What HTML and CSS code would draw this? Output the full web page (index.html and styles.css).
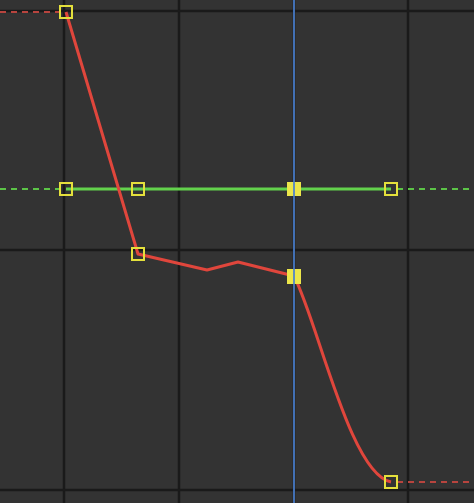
FILE: index.html
```html
<!doctype html>
<html lang="en">
<head>
	<meta charset="UTF-8">
	<title>Graph Editor</title>
	<link rel="stylesheet" href="styles.css">
</head>
<body>
	<div class="graph">
		<svg class="canvas" width="474" height="503" viewBox="0 0 474 503">
			<!-- grid -->
			<g class="grid">
				<line x1="64" y1="0" x2="64" y2="503"/>
				<line x1="179" y1="0" x2="179" y2="503"/>
				<line x1="294" y1="0" x2="294" y2="503"/>
				<line x1="408" y1="0" x2="408" y2="503"/>
				<line x1="0" y1="11" x2="474" y2="11"/>
				<line x1="0" y1="250" x2="474" y2="250"/>
				<line x1="0" y1="490" x2="474" y2="490"/>
			</g>

			<!-- green channel -->
			<line class="green ext" x1="0" y1="189" x2="60" y2="189"/>
			<line class="green ext" x1="397" y1="189" x2="474" y2="189"/>
			<line class="green" x1="66" y1="189" x2="391" y2="189"/>

			<!-- red channel -->
			<line class="red ext" x1="0" y1="12" x2="60" y2="12"/>
			<line class="red ext" x1="397" y1="482" x2="474" y2="482"/>
			<path class="red" d="M66,12 L138,254 L207,270 L238,262 L294,276 C318,322 350,474 391,482"/>

			<!-- keys -->
			<rect class="key" x="60" y="6" width="12" height="12"/>
			<rect class="key" x="60" y="183" width="12" height="12"/>
			<rect class="key" x="132" y="183" width="12" height="12"/>
			<rect class="key" x="385" y="183" width="12" height="12"/>
			<rect class="key" x="132" y="248" width="12" height="12"/>
			<rect class="key" x="385" y="476" width="12" height="12"/>
			<rect class="key sel" x="287" y="182" width="14" height="14"/>
			<rect class="key sel" x="287" y="269" width="14" height="15"/>

			<!-- playhead -->
			<line class="playhead" x1="294" y1="0" x2="294" y2="503"/>
		</svg>
	</div>
</body>
</html>
```
FILE: styles.css
```css
*{margin: 0;padding: 0;}
body{background-color: #333333;}
.graph{width: 474px;height: 503px;overflow: hidden;background-color: #333333;}
.canvas{display: block;}
.grid line{stroke: #1a1a1a;stroke-width: 2.5;}
.green{stroke: #63d24c;stroke-width: 3;fill: none;}
.red{stroke: #e0463c;stroke-width: 3;fill: none;stroke-linejoin: round;}
.ext{stroke-width: 2;stroke-dasharray: 6 5;}
.red.ext{stroke: #b8443e;}
.green.ext{stroke: #5cc447;}
.key{fill: none;stroke: #e4e03c;stroke-width: 2;}
.key.sel{fill: #ece64a;stroke: none;}
.playhead{stroke: #4a7fcf;stroke-width: 2;opacity: 0.85;}
```
